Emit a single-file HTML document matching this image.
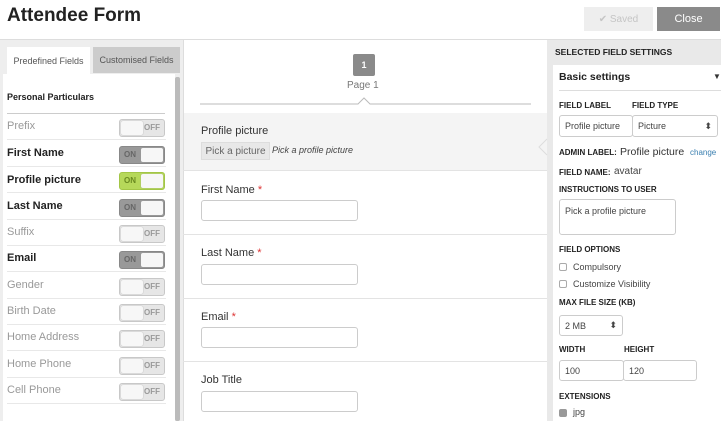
<!DOCTYPE html><html><head><style>
*{box-sizing:border-box;margin:0;padding:0}
body{width:721px;height:421px;overflow:hidden;background:#fff;font-family:"Liberation Sans",sans-serif;position:relative;color:#333}
.a{position:absolute}
.tg{position:absolute;left:119px;width:46px;height:18px;border:1px solid #c8c8c8;border-radius:3px;background:#e6e6e6;font-size:8px;font-weight:bold;color:#999}
.tg .k{position:absolute;top:1px;width:22px;height:14px;background:#f7f7f7;border-radius:2px;box-shadow:0 0 1px #999}
.off .k{left:1px}.off span{position:absolute;right:4px;top:3px}
.on{background:#999;border-color:#888;color:#777}.on .k{right:1px}.on span{position:absolute;left:4px;top:3px;color:#666}
.gr{background:#b6d85a;border-color:#a3c646}.gr span{color:#6a8a20}
.lb{position:absolute;left:7px;font-size:11px;color:#999}
.lb.b{color:#222;font-weight:bold}
.rl{position:absolute;left:7px;width:159px;height:1px;background:#e8e8e8}
.in{position:absolute;left:201px;width:157px;height:21px;border:1px solid #ccc;border-radius:3px;background:#fff}
.fl{position:absolute;left:201px;font-size:11px;color:#333}
.fl i{color:#d33;font-style:normal}
.hr{position:absolute;left:183px;width:364px;height:1px;background:#e3e3e3}
.h{position:absolute;left:559px;font-size:8px;font-weight:bold;color:#222}
.box{position:absolute;border:1px solid #ccc;border-radius:3px;background:#fff;font-size:9px;color:#444;padding:0 5px;display:flex;align-items:center}
</style></head><body>
<div class="a" style="left:7px;top:5px;font-size:19px;font-weight:bold;color:#222">Attendee Form</div>
<div class="a" style="left:584px;top:7px;width:69px;height:24px;background:#eee;color:#c5c5c5;font-size:10px;display:flex;align-items:center;justify-content:center">✔ Saved</div>
<div class="a" style="left:657px;top:7px;width:63px;height:24px;background:#8a8a8a;color:#fff;font-size:11px;display:flex;align-items:center;justify-content:center">Close</div>
<div class="a" style="left:0;top:39px;width:721px;height:1px;background:#ddd"></div>
<div class="a" style="left:0;top:40px;width:183px;height:381px;background:#eee"></div>
<div class="a" style="left:3px;top:74px;width:172px;height:347px;background:#fff"></div>
<div class="a" style="left:7px;top:47px;width:83px;height:27px;background:#fff;font-size:9px;color:#555;display:flex;align-items:center;justify-content:center">Predefined Fields</div>
<div class="a" style="left:93px;top:47px;width:87px;height:26px;background:#ccc;font-size:9px;color:#555;display:flex;align-items:center;justify-content:center">Customised Fields</div>
<div class="a" style="left:175px;top:77px;width:5px;height:344px;background:#bbb;border-radius:2px"></div>
<div class="a" style="left:7px;top:92px;font-size:9px;font-weight:bold;color:#222">Personal Particulars</div>
<div class="a" style="left:7px;top:113px;width:158px;height:1px;background:#ccc"></div>
<div class="lb" style="top:120px">Prefix</div><div class="tg off" style="top:119px"><div class="k"></div><span>OFF</span></div><div class="rl" style="top:139px"></div>
<div class="lb b" style="top:147px">First Name</div><div class="tg on" style="top:146px"><div class="k"></div><span>ON</span></div><div class="rl" style="top:166px"></div>
<div class="lb b" style="top:174px">Profile picture</div><div class="tg on gr" style="top:172px"><div class="k"></div><span>ON</span></div><div class="rl" style="top:192px"></div>
<div class="lb b" style="top:200px">Last Name</div><div class="tg on" style="top:199px"><div class="k"></div><span>ON</span></div><div class="rl" style="top:219px"></div>
<div class="lb" style="top:226px">Suffix</div><div class="tg off" style="top:225px"><div class="k"></div><span>OFF</span></div><div class="rl" style="top:245px"></div>
<div class="lb b" style="top:252px">Email</div><div class="tg on" style="top:251px"><div class="k"></div><span>ON</span></div><div class="rl" style="top:271px"></div>
<div class="lb" style="top:279px">Gender</div><div class="tg off" style="top:278px"><div class="k"></div><span>OFF</span></div><div class="rl" style="top:298px"></div>
<div class="lb" style="top:305px">Birth Date</div><div class="tg off" style="top:304px"><div class="k"></div><span>OFF</span></div><div class="rl" style="top:324px"></div>
<div class="lb" style="top:331px">Home Address</div><div class="tg off" style="top:330px"><div class="k"></div><span>OFF</span></div><div class="rl" style="top:350px"></div>
<div class="lb" style="top:358px">Home Phone</div><div class="tg off" style="top:357px"><div class="k"></div><span>OFF</span></div><div class="rl" style="top:377px"></div>
<div class="lb" style="top:384px">Cell Phone</div><div class="tg off" style="top:383px"><div class="k"></div><span>OFF</span></div><div class="rl" style="top:403px"></div>
<div class="a" style="left:183px;top:40px;width:1px;height:381px;background:#ddd"></div>
<div class="a" style="left:353px;top:54px;width:22px;height:22px;background:#8a8a8a;border-radius:2px;color:#fff;font-size:9px;font-weight:bold;display:flex;align-items:center;justify-content:center">1</div>
<div class="a" style="left:347px;top:80px;font-size:10px;color:#777">Page 1</div>
<svg class="a" style="left:200px;top:96px" width="332" height="10"><path d="M0 8H158L164 2L170 8H331" stroke="#bbb" fill="none"/></svg>
<div class="a" style="left:184px;top:113px;width:363px;height:57px;background:#f4f4f4"></div>
<div class="fl" style="top:125px">Profile picture</div>
<div class="a" style="left:201px;top:142px;width:69px;height:18px;background:#e8e8e8;border:1px solid #ddd;font-size:10px;color:#666;display:flex;align-items:center;justify-content:center">Pick a picture</div>
<div class="a" style="left:272px;top:145px;font-size:9px;font-style:italic;color:#444">Pick a profile picture</div>
<div class="hr" style="top:170px"></div>
<div class="fl" style="top:184px">First Name <i>*</i></div><div class="in" style="top:200px"></div>
<div class="hr" style="top:234px"></div>
<div class="fl" style="top:247px">Last Name <i>*</i></div><div class="in" style="top:264px"></div>
<div class="hr" style="top:298px"></div>
<div class="fl" style="top:311px">Email <i>*</i></div><div class="in" style="top:327px"></div>
<div class="hr" style="top:361px"></div>
<div class="fl" style="top:374px">Job Title</div><div class="in" style="top:391px"></div>
<div class="a" style="left:547px;top:40px;width:174px;height:381px;background:#e9e9e9"></div>
<div class="a" style="left:553px;top:65px;width:168px;height:356px;background:#fff"></div>
<div class="a" style="left:555px;top:47px;font-size:8.5px;font-weight:bold;color:#222">SELECTED FIELD SETTINGS</div>
<div class="a" style="left:559px;top:71px;font-size:10.5px;font-weight:bold;color:#222">Basic settings</div>
<div class="a" style="left:713px;top:72px;font-size:8px">▼</div>
<div class="a" style="left:559px;top:90px;width:162px;height:1px;background:#ddd"></div>
<div class="h" style="top:101px">FIELD LABEL</div><div class="h" style="left:632px;top:101px">FIELD TYPE</div>
<div class="box" style="left:559px;top:115px;width:74px;height:22px">Profile picture</div>
<div class="box" style="left:632px;top:115px;width:86px;height:22px">Picture<span style="margin-left:auto">⬍</span></div>
<svg class="a" style="left:538px;top:138px" width="10" height="18"><path d="M9 1L1 9L9 17" stroke="#ddd" fill="none"/></svg>
<div class="h" style="top:148px">ADMIN LABEL:</div><div class="a" style="left:620px;top:146px;font-size:10.5px;color:#333">Profile picture</div><div class="a" style="left:690px;top:148px;font-size:8px;color:#3a7fb0">change</div>
<div class="h" style="top:168px">FIELD NAME:</div><div class="a" style="left:614px;top:166px;font-size:10px;color:#444">avatar</div>
<div class="h" style="top:185px">INSTRUCTIONS TO USER</div>
<div class="box" style="left:559px;top:199px;width:117px;height:36px;align-items:flex-start;padding-top:6px">Pick a profile picture</div>
<div class="h" style="top:245px">FIELD OPTIONS</div>
<div class="a" style="left:559px;top:263px;width:8px;height:8px;border:1px solid #aaa;border-radius:2px"></div><div class="a" style="left:573px;top:262px;font-size:9px;color:#444">Compulsory</div>
<div class="a" style="left:559px;top:280px;width:8px;height:8px;border:1px solid #aaa;border-radius:2px"></div><div class="a" style="left:573px;top:279px;font-size:9px;color:#444">Customize Visibility</div>
<div class="h" style="top:298px">MAX FILE SIZE (KB)</div>
<div class="box" style="left:559px;top:315px;width:64px;height:21px">2 MB<span style="margin-left:auto">⬍</span></div>
<div class="h" style="top:345px">WIDTH</div><div class="h" style="left:624px;top:345px">HEIGHT</div>
<div class="box" style="left:559px;top:360px;width:65px;height:21px">100</div>
<div class="box" style="left:623px;top:360px;width:74px;height:21px">120</div>
<div class="h" style="top:392px">EXTENSIONS</div>
<div class="a" style="left:559px;top:409px;width:8px;height:8px;background:#999;border-radius:2px"></div><div class="a" style="left:573px;top:407px;font-size:9px;color:#444">jpg</div>
</body></html>
